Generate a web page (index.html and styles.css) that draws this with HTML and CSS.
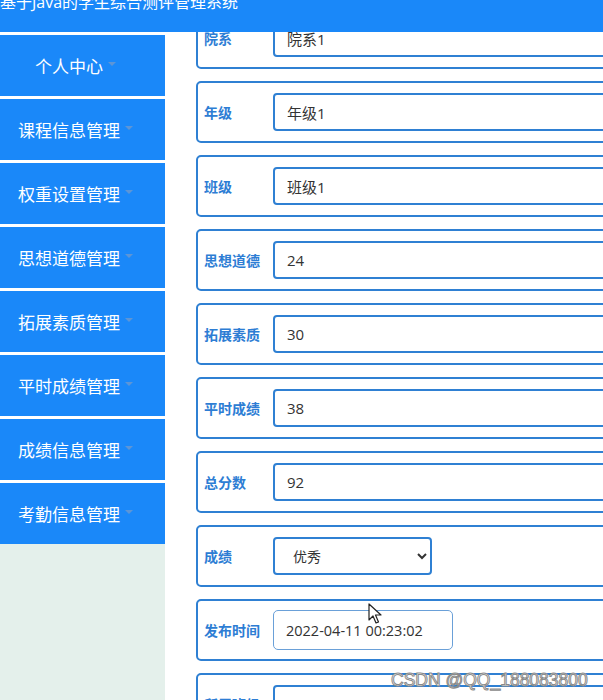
FILE: index.html
```html
<!DOCTYPE html>
<html lang="zh">
<head>
  <meta charset="UTF-8">
  <title>学生综合测评管理系统</title>
  <link rel="stylesheet" href="styles.css">
</head>
<body>

  <div class="header">
    <div class="title">基于Java的学生综合测评管理系统</div>
  </div>

  <div class="wrap">
    <div class="sidebar">
      <div class="menu first">个人中心<span class="caret"></span></div>
      <div class="menu">课程信息管理<span class="caret"></span></div>
      <div class="menu">权重设置管理<span class="caret"></span></div>
      <div class="menu">思想道德管理<span class="caret"></span></div>
      <div class="menu">拓展素质管理<span class="caret"></span></div>
      <div class="menu">平时成绩管理<span class="caret"></span></div>
      <div class="menu">成绩信息管理<span class="caret"></span></div>
      <div class="menu">考勤信息管理<span class="caret"></span></div>
    </div>

    <div class="main">
      <div class="form">
        <div class="row"><label>院系</label><input class="field" value="院系1"></div>
        <div class="row"><label>年级</label><input class="field" value="年级1"></div>
        <div class="row"><label>班级</label><input class="field" value="班级1"></div>
        <div class="row"><label>思想道德</label><input class="field" value="24"></div>
        <div class="row"><label>拓展素质</label><input class="field" value="30"></div>
        <div class="row"><label>平时成绩</label><input class="field" value="38"></div>
        <div class="row"><label>总分数</label><input class="field" value="92"></div>
        <div class="row">
          <label>成绩</label>
          <select class="pick">
            <option>优秀</option>
            <option>良好</option>
            <option>及格</option>
          </select>
        </div>
        <div class="row"><label>发布时间</label><input class="date" value="2022-04-11 00:23:02"></div>
        <div class="row"><label>所属班级</label><input class="field" value=""></div>
      </div>
    </div>
  </div>

  <svg class="cursor" width="14" height="22" viewBox="0 0 14 22">
    <path d="M1 1 L1 17 L5 13 L8 20 L10.5 19 L7.5 12 L13 12 Z" fill="#fff" stroke="#222" stroke-width="1.2" stroke-linejoin="round"/>
  </svg>

  <div class="mark">CSDN @QQ_188083800</div>

</body>
</html>
```

FILE: styles.css
```css
body {
  margin: 0;
  font-family: "Open Sans", "Noto Sans CJK SC", sans-serif;
  background: #fff;
  overflow: hidden;
  height: 700px;
}

.header {
  height: 32px;
  background: #1a88f9;
  overflow: hidden;
  position: relative;
  z-index: 2;
}

.title {
  color: #fff;
  font-size: 16px;
  line-height: 16px;
  margin-top: -6px;
  white-space: nowrap;
}

.wrap {
  display: flex;
  height: 668px;
}

.sidebar {
  width: 165px;
  flex: none;
  padding-top: 3px;
  background: #e4f0eb;
  display: flex;
  flex-direction: column;
  gap: 3px;
}

.menu {
  height: 61px;
  background: #1a88f9;
  color: #fff;
  font-size: 17px;
  display: flex;
  align-items: center;
  padding-left: 18px;
  box-shadow: 0 -3px 0 #fff;
}

.menu.first {
  justify-content: center;
  padding-left: 0;
  padding-right: 14px;
}

.caret {
  display: inline-block;
  width: 0;
  height: 0;
  margin-left: 5px;
  margin-top: -4px;
  border-left: 4px solid transparent;
  border-right: 4px solid transparent;
  border-top: 4px solid #5d95d6;
}

.main {
  flex: 1;
  overflow: hidden;
  padding-left: 31px;
}

.form {
  width: 520px;
  margin-top: -25px;
  display: flex;
  flex-direction: column;
  gap: 12px;
}

.row {
  height: 58px;
  border: 2px solid #2f80d3;
  border-radius: 5px;
  display: flex;
  align-items: center;
  padding-left: 6px;
}

.row label {
  width: 69px;
  flex: none;
  color: #2d7dd4;
  font-weight: bold;
  font-size: 14px;
}

.field {
  flex: 1;
  height: 38px;
  box-sizing: border-box;
  border: 2px solid #2f80d3;
  border-radius: 4px;
  padding: 0 12px;
  font-family: inherit;
  font-size: 15px;
  color: #333;
  outline: none;
}

.pick {
  width: 159px;
  height: 38px;
  box-sizing: border-box;
  border: 2px solid #2f80d3;
  border-radius: 4px;
  padding-left: 14px;
  font-family: inherit;
  font-size: 14px;
  color: #333;
  background: #fff;
}

.date {
  width: 180px;
  height: 40px;
  box-sizing: border-box;
  border: 1px solid #6aa0d8;
  border-radius: 5px;
  padding: 0 12px;
  font-family: inherit;
  font-size: 14.5px;
  color: #333;
  outline: none;
}

.cursor {
  position: absolute;
  left: 368px;
  top: 603px;
}

.mark {
  position: absolute;
  left: 391px;
  top: 670px;
  font-family: "Liberation Sans", sans-serif;
  font-size: 17.5px;
  color: #fff;
  -webkit-text-stroke: 1px #8a8a8a;
  white-space: nowrap;
}
```
